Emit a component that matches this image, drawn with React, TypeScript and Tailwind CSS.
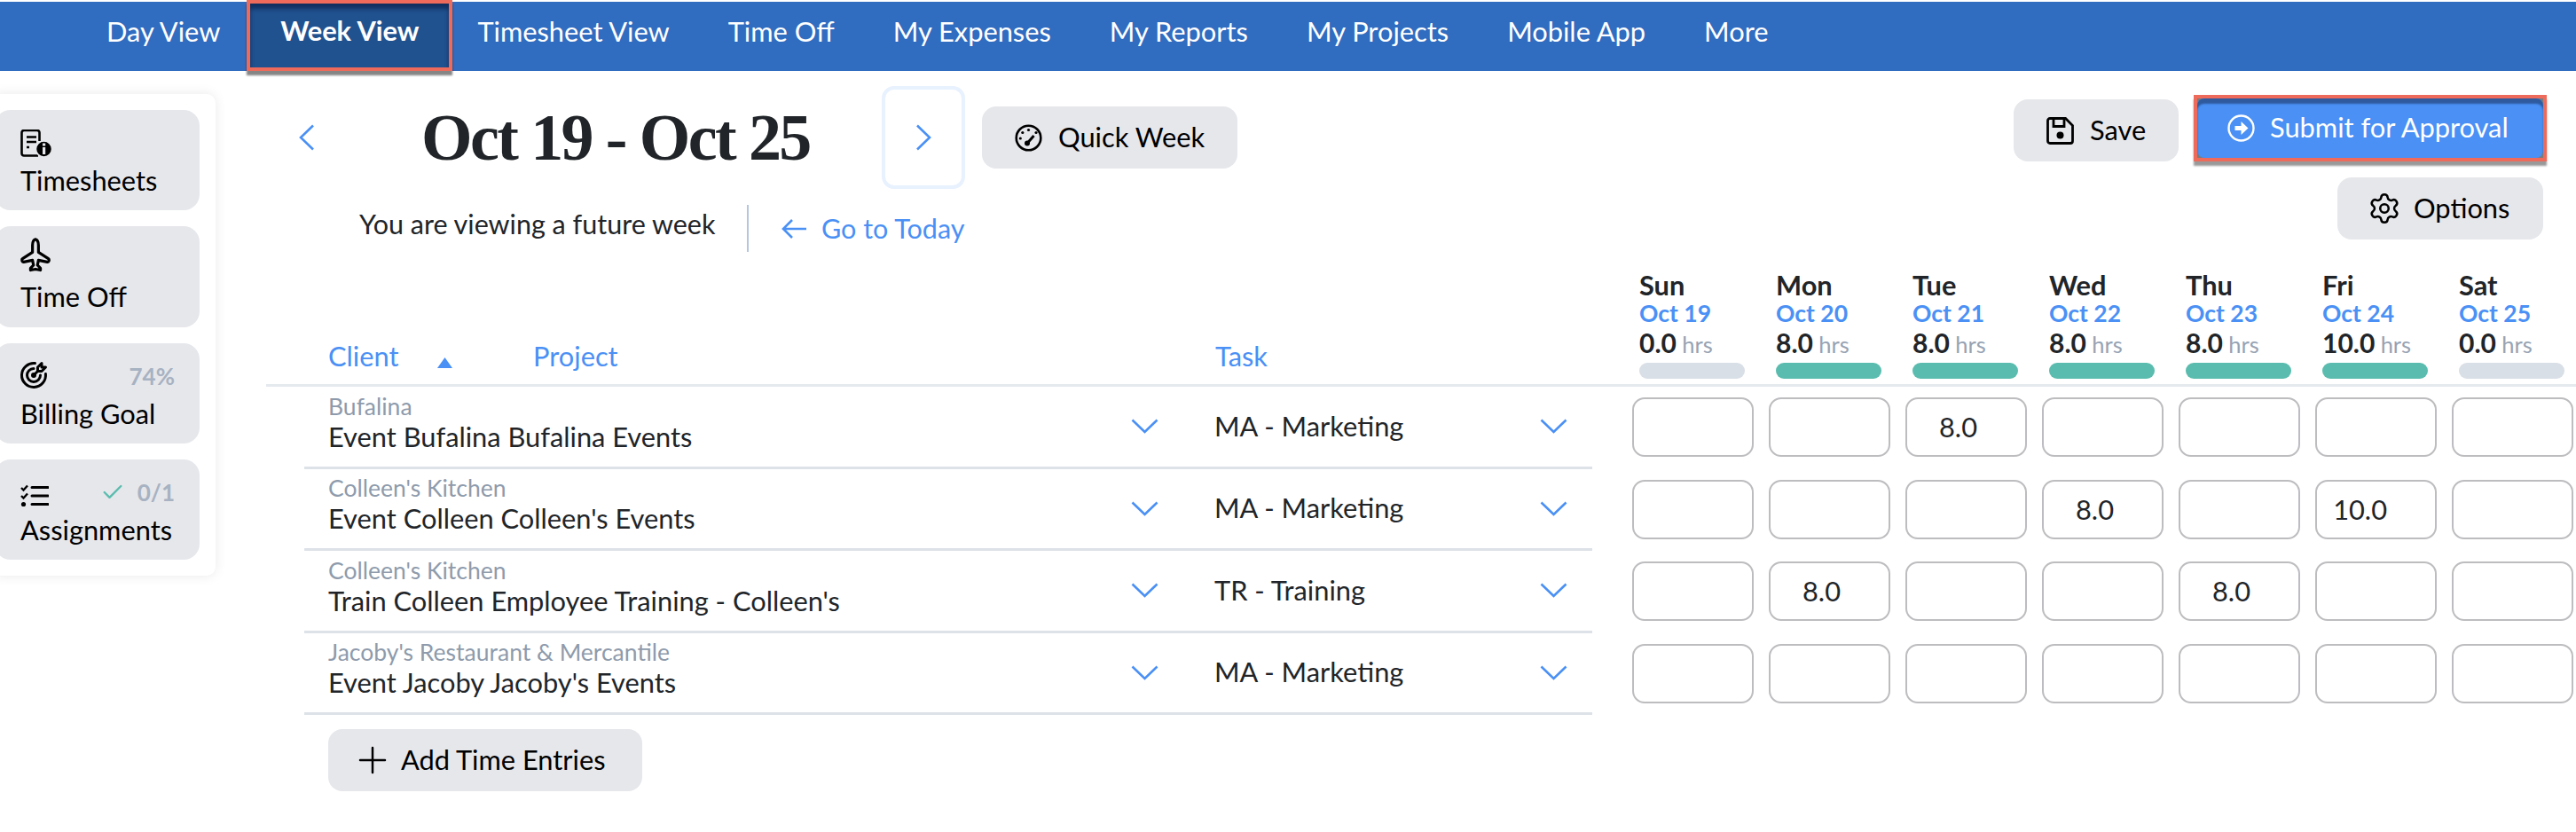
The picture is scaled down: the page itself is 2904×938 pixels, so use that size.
import React from "react";
import { Plane, Settings, Plus, Check } from "lucide-react";
import { TbTargetArrow } from "react-icons/tb";

const navItems = ["Day View", "Week View", "Timesheet View", "Time Off", "My Expenses", "My Reports", "My Projects", "Mobile App", "More"];
const days = [
  { d: "Sun", o: "Oct 19", h: "0.0", on: false },
  { d: "Mon", o: "Oct 20", h: "8.0", on: true },
  { d: "Tue", o: "Oct 21", h: "8.0", on: true },
  { d: "Wed", o: "Oct 22", h: "8.0", on: true },
  { d: "Thu", o: "Oct 23", h: "8.0", on: true },
  { d: "Fri", o: "Oct 24", h: "10.0", on: true },
  { d: "Sat", o: "Oct 25", h: "0.0", on: false },
];
const rows = [
  { c: "Bufalina", p: "Event Bufalina Bufalina Events", t: "MA - Marketing", v: ["", "", "8.0", "", "", "", ""] },
  { c: "Colleen's Kitchen", p: "Event Colleen Colleen's Events", t: "MA - Marketing", v: ["", "", "", "8.0", "", "10.0", ""] },
  { c: "Colleen's Kitchen", p: "Train Colleen Employee Training - Colleen's", t: "TR - Training", v: ["", "8.0", "", "", "8.0", "", ""] },
  { c: "Jacoby's Restaurant & Mercantile", p: "Event Jacoby Jacoby's Events", t: "MA - Marketing", v: ["", "", "", "", "", "", ""] },
];

function ChevronDown() {
  return (
    <svg width="31" height="17" viewBox="0 0 31 17" fill="none" stroke="#4a90f5" strokeWidth="2.6" className="shrink-0">
      <path d="M1.5 1.5 L15.5 15 L29.5 1.5" />
    </svg>
  );
}
function ChevronSide({ dir }: { dir: "l" | "r" }) {
  return (
    <svg width="18" height="30" viewBox="0 0 18 30" fill="none" stroke="#4a90f5" strokeWidth="2.6" className="shrink-0">
      <path d={dir === "l" ? "M16 1.5 L2 15 L16 28.5" : "M2 1.5 L16 15 L2 28.5"} />
    </svg>
  );
}
function SheetIcon() {
  return (
    <svg width="36" height="32" viewBox="0 0 36 32" fill="none" stroke="#000" strokeWidth="2.6">
      <path d="M20 29.5 H4 a2.5 2.5 0 0 1 -2.5 -2.5 V3.5 A2.5 2.5 0 0 1 4 1 h15 a2.5 2.5 0 0 1 2.5 2.5 V13" />
      <path d="M7 8.5 h11 M7 14 h11 M7 20 h3" />
      <circle cx="26.5" cy="22" r="9" fill="#000" stroke="#e6e7eb" strokeWidth="1.5" />
      <rect x="25" y="20" width="3.2" height="8" fill="#e6e7eb" stroke="none" />
      <rect x="25" y="15.5" width="3.2" height="3" fill="#e6e7eb" stroke="none" />
    </svg>
  );
}
function ListIcon() {
  return (
    <svg width="32" height="26" viewBox="0 0 32 26" fill="none" stroke="#000" strokeWidth="3">
      <path d="M1 4 l2.5 2.5 L8 1.5 M1 13 l2.5 2.5 L8 10.5" strokeWidth="2.4" />
      <circle cx="3.5" cy="22.5" r="2.6" fill="#000" stroke="none" />
      <path d="M13 3.5 h18 M13 13 h18 M13 22.5 h18" strokeLinecap="round" />
    </svg>
  );
}
function GaugeIcon() {
  return (
    <svg width="31" height="31" viewBox="0 0 31 31" fill="none" stroke="#000" strokeWidth="2.6" className="shrink-0">
      <circle cx="15.5" cy="15.5" r="13.8" />
      <circle cx="15.5" cy="6.5" r="1.6" fill="#000" stroke="none" />
      <circle cx="8.8" cy="9.5" r="1.6" fill="#000" stroke="none" />
      <circle cx="6.3" cy="16" r="1.6" fill="#000" stroke="none" />
      <circle cx="24" cy="9.5" r="1.6" fill="#000" stroke="none" />
      <path d="M14.5 21 L21.5 13" strokeWidth="3" />
      <circle cx="14" cy="21.5" r="3" fill="#000" stroke="none" />
    </svg>
  );
}
function SubmitIcon() {
  return (
    <svg width="31" height="31" viewBox="0 0 31 31" fill="none" className="shrink-0">
      <circle cx="15.5" cy="15.5" r="14" stroke="#fff" strokeWidth="2.4" />
      <path d="M8.5 13 h7 v-5 l8 7.5 l-8 7.5 v-5 h-7 z" fill="#fff" />
    </svg>
  );
}
function ArrowBack() {
  return (
    <svg width="28" height="22" viewBox="0 0 28 22" fill="none" stroke="#4a90f5" strokeWidth="2.6" className="shrink-0">
      <path d="M28 11 H2 M12 1 L2 11 L12 21" />
    </svg>
  );
}
function FloppyIcon() {
  return (
    <svg width="31" height="31" viewBox="0 0 31 31" fill="none" stroke="#000" strokeWidth="2.8" className="shrink-0">
      <path d="M4 1.5 H21.5 L29.5 9.5 V27 a2.5 2.5 0 0 1 -2.5 2.5 H4 A2.5 2.5 0 0 1 1.5 27 V4 A2.5 2.5 0 0 1 4 1.5 Z" />
      <path d="M8 2 V10.5 H20 V2" />
      <circle cx="15.5" cy="20.5" r="4" fill="#000" stroke="none" />
    </svg>
  );
}

function SideCard({ icon, badge, label }: { icon: React.ReactNode; badge?: React.ReactNode; label: string }) {
  return (
    <div className="h-[114px] w-[231px] rounded-[18px] bg-[#e6e7eb] pl-[29px] pr-[28px] flex flex-col">
      <div className="h-[54px] flex items-end justify-between">
        {icon}
        {badge}
      </div>
      <div className="mt-[6px] leading-[40px] text-black">{label}</div>
    </div>
  );
}

export default function App() {
  return (
    <div className="w-[2904px] h-[938px] overflow-hidden bg-white pt-[2px] text-[30.8px] text-[#212529]" style={{ fontFamily: "Lato, 'Liberation Sans', sans-serif" }}>
      <nav className="h-[78px] bg-[#306cc0] flex pl-[87px]">
        {navItems.map((n) =>
          n === "Week View" ? (
            <div key={n} className="-ml-[3px] -mr-[5px] -mt-[2px] h-[80px] w-[232px] shrink-0 border-[4px] border-[#ee6a5a] bg-[#215290] text-white font-bold flex items-center justify-center pb-[10px] shadow-[0_5px_2px_#0000007a,inset_0_6px_5px_#0f2f5f]">
              {n}
            </div>
          ) : (
            <div key={n} className="px-[33px] text-white flex items-center pb-[10px] shrink-0">
              {n}
            </div>
          )
        )}
      </nav>
      <div className="flex">
        <aside className="mt-[26px] h-[543px] w-[249px] shrink-0 rounded-r-[10px] bg-white shadow-[0_0_14px_#00000017] py-[18px] flex flex-col gap-[18px] -ml-[6px]">
          <SideCard icon={<SheetIcon />} label="Timesheets" />
          <SideCard icon={<Plane size={38} strokeWidth={2} color="#000" className="-rotate-45 -ml-[2px]" />} label="Time Off" />
          <SideCard
            icon={<TbTargetArrow size={36} color="#000" className="-ml-[3px]" />}
            badge={<span className="text-[26px] leading-[34px] font-bold text-[#a7b2c2]">74%</span>}
            label="Billing Goal"
          />
          <SideCard
            icon={<ListIcon />}
            badge={
              <span className="flex items-center gap-[14px] text-[26px] leading-[34px] font-bold text-[#a7b2c2]">
                <Check size={28} color="#5abcae" strokeWidth={2} />
                0/1
              </span>
            }
            label="Assignments"
          />
        </aside>

        <main className="w-[2604px] shrink-0 ml-[57px]">
          <div className="h-[220px] flex justify-between">
            <div>
              <div className="h-[116px] mt-[17px] flex items-center pl-[37px]">
                <ChevronSide dir="l" />
                <h1 className="ml-[120px] w-[519px] text-[74px] leading-none font-bold tracking-[-2.6px]" style={{ fontFamily: "'Liberation Serif', serif" }}>
                  Oct 19 - Oct 25
                </h1>
                <div className="h-[116px] w-[94px] shrink-0 rounded-[14px] border-[4px] border-[#e8f1fe] flex items-center justify-center">
                  <ChevronSide dir="r" />
                </div>
                <button className="ml-[19px] h-[70px] w-[288px] shrink-0 rounded-[16px] bg-[#e6e7eb] flex items-center pl-[37px] gap-[18px] text-black">
                  <GaugeIcon />
                  Quick Week
                </button>
              </div>
              <div className="mt-[18px] h-[53px] flex items-center pl-[105px] text-[30.5px]">
                <span className="w-[437px] pb-[10px]">You are viewing a future week</span>
                <span className="h-[53px] w-[2px] bg-[#b5c7de]" />
                <span className="ml-[37px] flex items-center gap-[17px] text-[#4a90f5]">
                  <ArrowBack />
                  Go to Today
                </span>
              </div>
            </div>
            <div className="flex flex-col items-end pr-[33px] pt-[27px]">
              <div className="flex items-start">
                <button className="mt-[5px] h-[70px] w-[186px] rounded-[16px] bg-[#e6e7eb] text-black flex items-center pl-[37px] gap-[18px]">
                  <FloppyIcon />
                  Save
                </button>
                <button className="ml-[17px] h-[75px] w-[398px] border-[4px] border-[#ee6a5a] bg-[#7b7b7b] text-white shadow-[0_5px_2px_#00000066]">
                  <span className="h-full rounded-[8px] bg-[#4a90f5] flex items-center pl-[34px] gap-[17px] shadow-[inset_0_6px_2px_#2f5a9e]">
                    <SubmitIcon />
                    Submit for Approval
                  </span>
                </button>
              </div>
              <button className="mt-[18px] mr-[4px] h-[70px] w-[232px] rounded-[16px] bg-[#e6e7eb] text-black flex items-center pl-[34px] gap-[14px]">
                <Settings size={38} strokeWidth={1.6} />
                Options
              </button>
            </div>
          </div>

          <div className="h-[136px] border-b-[3px] border-[#e5eaef] flex items-end text-[#4a90f5]">
            <div className="w-[1540px] flex items-end h-[36px] mb-[13px] shrink-0 pl-[70px] leading-[36px]">
              <span className="w-[123px]">Client</span>
              <svg width="17" height="12" viewBox="0 0 17 12" className="mb-[5px] shrink-0">
                <path d="M8.5 0 L17 12 H0 Z" fill="#4a90f5" />
              </svg>
              <span className="ml-[91px] w-[769px]">Project</span>
              <span>Task</span>
            </div>
            <div className="flex">
              {days.map((x) => (
                <div key={x.d} className="w-[154px] shrink-0 pl-[8px] pb-[6px]">
                  <div className="leading-[34px] font-bold text-[#212529]">{x.d}</div>
                  <div className="text-[26.5px] leading-[29px] font-bold text-[#4a90f5]">{x.o}</div>
                  <div className="text-[30px] leading-[36px] font-bold text-[#212529]">
                    {x.h} <span className="text-[25.5px] font-normal text-[#97a3b3] -ml-[1px]">hrs</span>
                  </div>
                  <div className={x.on ? "mt-[3px] h-[18px] w-[119px] rounded-full bg-[#5abcae]" : "mt-[3px] h-[18px] w-[119px] rounded-full bg-[#d9dfe6]"} />
                </div>
              ))}
            </div>
          </div>

          {rows.map((r, i) => (
            <div key={i} className="flex h-[92.5px]">
              <div className="ml-[43px] w-[1452px] shrink-0 border-b-[3px] border-[#dde2e8] pl-[27px] flex items-center">
                <div className="w-[905px] shrink-0 mb-[6px]">
                  <div className="text-[26.5px] leading-[30px] text-[#8e9bac]">{r.c}</div>
                  <div className="leading-[40px]">{r.p}</div>
                </div>
                <ChevronDown />
                <div className="ml-[63px] w-[367px] shrink-0">{r.t}</div>
                <ChevronDown />
              </div>
              <div className="ml-[45px] flex gap-[17px] pt-[12px]">
                {r.v.map((v, j) => (
                  <input
                    key={j}
                    readOnly
                    defaultValue={v}
                    className="h-[67px] w-[137px] rounded-[14px] border-2 border-[#bdbdc0] bg-white text-right pr-[54px] outline-none text-[#212529]"
                  />
                ))}
              </div>
            </div>
          ))}

          <button className="ml-[70px] mt-[16px] h-[70px] w-[354px] rounded-[16px] bg-[#e6e7eb] text-black flex items-center pl-[26px] gap-[8px]">
            <Plus size={48} strokeWidth={1.25} />
            Add Time Entries
          </button>
        </main>
      </div>
    </div>
  );
}
